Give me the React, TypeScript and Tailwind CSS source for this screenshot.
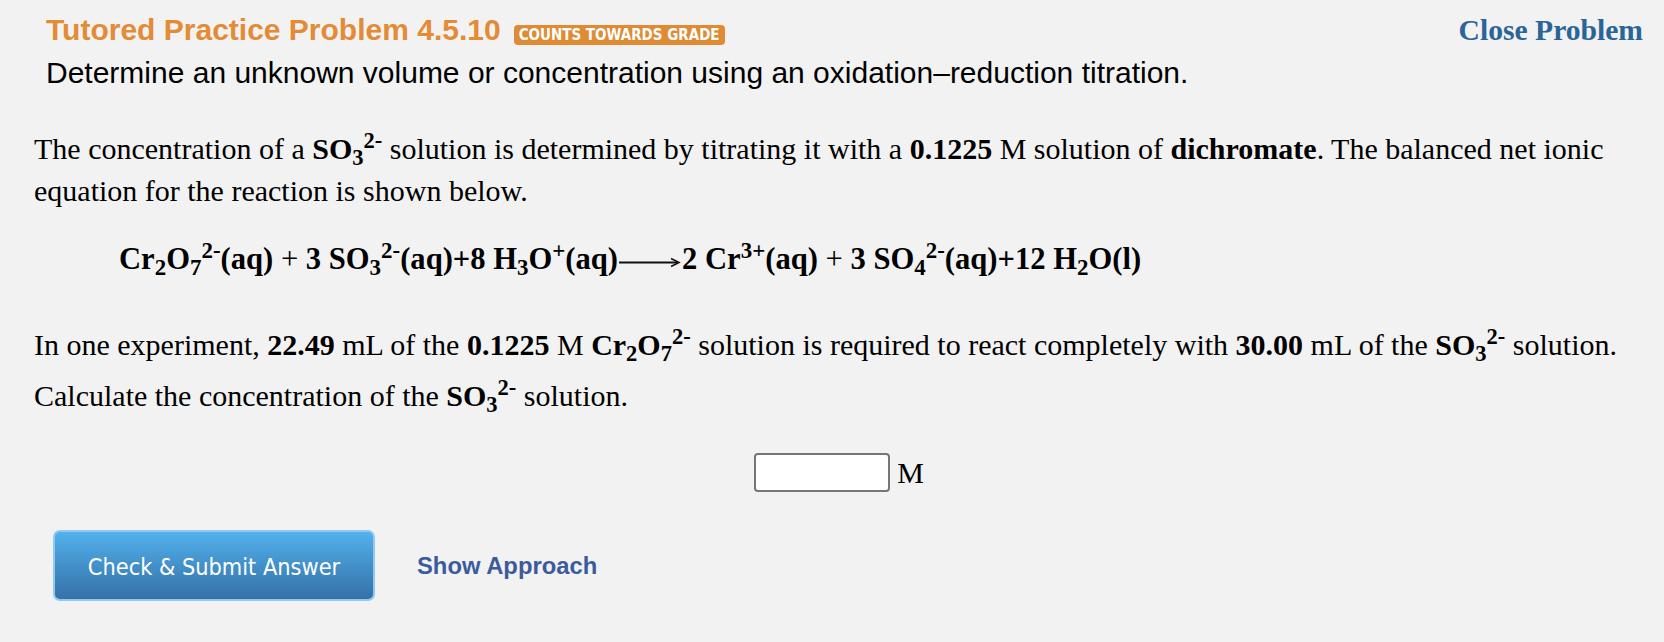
import React from "react";

const serif = "font-['Liberation_Serif','Times_New_Roman',serif]";

function Arrow() {
  return (
    <svg width="62" height="14" viewBox="0 0 62 14" className="inline-block align-middle mx-[1px]" aria-hidden>
      <line x1="0" y1="7.5" x2="58" y2="7.5" stroke="#111" strokeWidth="2" />
      <path d="M52 3.5 L60 7.5 L52 11.5" fill="none" stroke="#111" strokeWidth="1.6" />
    </svg>
  );
}

export default function App() {
  return (
    <div className="min-h-[642px] w-[1664px] bg-[#f2f2f2] text-black">
      <header className="flex items-baseline justify-between pl-[46px] pr-[21px] pt-[13px]">
        <div className="flex items-baseline">
          <h1 className="font-['Liberation_Sans',Arial,sans-serif] text-[30px] font-bold leading-[34px] text-[#e38b35]">
            Tutored Practice Problem 4.5.10
          </h1>
          <span className="ml-[13px] inline-block h-[20px] rounded-[4px] bg-[#e08a33] px-[5px] font-['DejaVu_Sans_Condensed','DejaVu_Sans',sans-serif] text-[15px] font-bold leading-[20px] text-white [font-stretch:condensed]">
            COUNTS TOWARDS GRADE
          </span>
        </div>
        <a href="#" className={`${serif} text-[29.6px] font-bold leading-[34px] text-[#2a6599]`}>
          Close Problem
        </a>
      </header>

      <p className="mt-[9px] pl-[46px] font-['Liberation_Sans',Arial,sans-serif] text-[30px] leading-[34px]">
        Determine an unknown volume or concentration using an oxidation–reduction titration.
      </p>

      <div className={`${serif} pl-[34px] pr-[20px] text-[30px]`}>
        <div className="mt-[38px] leading-[42px]">
          <div className="whitespace-nowrap">
            The concentration of a <b>SO<sub>3</sub><sup>2-</sup></b> solution is determined by titrating it with a{" "}
            <b>0.1225</b> M solution of <b>dichromate</b>. The balanced net ionic
          </div>
          <div className="whitespace-nowrap">equation for the reaction is shown below.</div>
        </div>

        <div className="mt-[26px] whitespace-nowrap pl-[85px] text-[30.6px] leading-[42px]">
          <b>
            Cr<sub>2</sub>O<sub>7</sub><sup>2-</sup>(aq)
          </b>
          <span> + </span>
          <b>
            3 SO<sub>3</sub><sup>2-</sup>(aq)+8 H<sub>3</sub>O<sup>+</sup>(aq)
          </b>
          <Arrow />
          <b>
            2 Cr<sup>3+</sup>(aq)
          </b>
          <span> + </span>
          <b>
            3 SO<sub>4</sub><sup>2-</sup>(aq)+12 H<sub>2</sub>O(l)
          </b>
        </div>

        <div className="mt-[39px] leading-[51px]">
          <div className="whitespace-nowrap">
            In one experiment, <b>22.49</b> mL of the <b>0.1225</b> M{" "}
            <b>
              Cr<sub>2</sub>O<sub>7</sub><sup>2-</sup>
            </b>{" "}
            solution is required to react completely with <b>30.00</b> mL of the{" "}
            <b>
              SO<sub>3</sub><sup>2-</sup>
            </b>{" "}
            solution.
          </div>
          <div className="whitespace-nowrap">
            Calculate the concentration of the{" "}
            <b>
              SO<sub>3</sub><sup>2-</sup>
            </b>{" "}
            solution.
          </div>
        </div>

        <div className="mt-[32px] flex items-center justify-center">
          <input
            type="text"
            aria-label="answer"
            className="h-[39px] w-[136px] rounded-[4px] border-2 border-[#767676] bg-white px-2"
          />
          <span className="ml-[7px] leading-[39px]">M</span>
        </div>
      </div>

      <div className="mt-[38px] flex items-center pl-[53px]">
        <button className="h-[71px] w-[322px] rounded-[7px] border-2 border-[#8ecbee] bg-gradient-to-b from-[#52b1ec] to-[#3571a8] pt-[3px] font-['DejaVu_Sans_Condensed','DejaVu_Sans',sans-serif] text-[23.3px] text-white [font-stretch:condensed]">
          Check &amp; Submit Answer
        </button>
        <a href="#" className="ml-[42px] font-['Liberation_Sans',Arial,sans-serif] text-[23.8px] font-bold text-[#3b5b9c]">
          Show Approach
        </a>
      </div>
    </div>
  );
}
